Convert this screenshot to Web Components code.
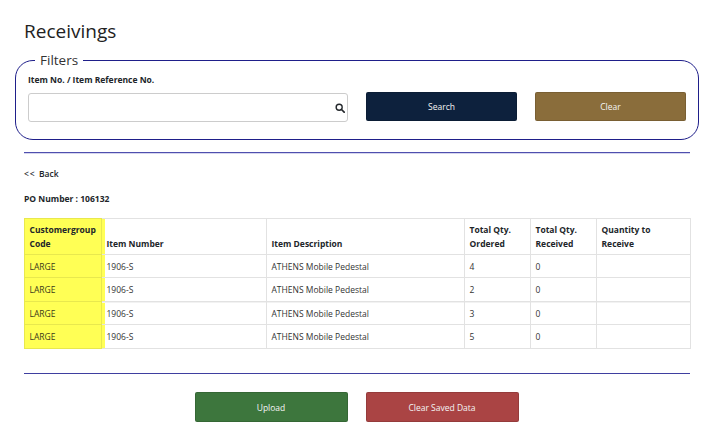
<!DOCTYPE html>
<html>
<head>
<meta charset="utf-8">
<style>
  html, body { margin: 0; background: #fff; }
  body { font-family: "Open Sans", "Noto Sans", sans-serif; color: #212529; }
</style>
</head>
<body>
<receivings-page></receivings-page>

<script>
class UiButton extends HTMLElement {
  connectedCallback() {
    this.attachShadow({ mode: 'open' });
    this.shadowRoot.innerHTML = `
      <style>
        :host {
          display: flex;
          align-items: center;
          justify-content: center;
          box-sizing: border-box;
          width: var(--btn-width, 151px);
          height: var(--btn-height, 29px);
          border-radius: 2px;
          border: 1px solid rgba(0,0,0,.12);
          background: var(--btn-bg);
          color: #f4f4f4;
          font-size: 8.5px;
          font-weight: 500;
        }
      </style>
      <slot></slot>
    `;
  }
}

class FilterPanel extends HTMLElement {
  connectedCallback() {
    this.attachShadow({ mode: 'open' });
    this.shadowRoot.innerHTML = `
      <style>
        :host { display: block; margin: 7px 14px 0 15px; }
        fieldset {
          margin: 0;
          padding: 0 12px 0 12px;
          height: 88px;
          box-sizing: border-box;
          border: 1px solid #1f1f8a;
          border-radius: 18px;
        }
        legend {
          margin-left: 7px;
          padding: 0 5px;
          font-size: 13.5px;
          line-height: 16px;
          color: #333;
        }
        label {
          display: block;
          font-size: 8.5px;
          font-weight: 700;
          line-height: 12px;
          margin-top: 6px;
          color: #212529;
        }
        .row { display: flex; align-items: flex-start; margin-top: 6px; }
        .search {
          box-sizing: border-box;
          width: 320px;
          height: 29px;
          margin-right: 18px;
          border: 1px solid #ccc;
          border-radius: 3px;
          display: flex;
          align-items: center;
          justify-content: flex-end;
          padding-right: 2px;
          margin-top: 1px;
        }
        svg { width: 10px; height: 10px; display: block; }
        ui-button + ui-button { margin-left: 18px; }
      </style>
      <fieldset>
        <legend>Filters</legend>
        <label>Item No. / Item Reference No.</label>
        <div class="row">
          <div class="search">
            <svg viewBox="0 0 12 12" fill="none" stroke="#23272b">
              <circle cx="5" cy="5" r="3.6" stroke-width="1.7"/>
              <path d="M7.8 7.8L11 11" stroke-width="2" stroke-linecap="round"/>
            </svg>
          </div>
          <ui-button style="--btn-bg:#0d213d">Search</ui-button>
          <ui-button style="--btn-bg:#8a6d3b">Clear</ui-button>
        </div>
      </fieldset>
    `;
  }
}

class ReceivingsTable extends HTMLElement {
  connectedCallback() {
    const rows = [
      ['LARGE', '1906-S', 'ATHENS Mobile Pedestal', '4', '0', 23],
      ['LARGE', '1906-S', 'ATHENS Mobile Pedestal', '2', '0', 24],
      ['LARGE', '1906-S', 'ATHENS Mobile Pedestal', '3', '0', 23],
      ['LARGE', '1906-S', 'ATHENS Mobile Pedestal', '5', '0', 24]
    ];
    const body = rows.map(r => `
      <tr style="height:${r[5]}px">
        <td class="code">${r[0]}</td>
        <td>${r[1]}</td>
        <td>${r[2]}</td>
        <td>${r[3]}</td>
        <td>${r[4]}</td>
        <td></td>
      </tr>`).join('');

    this.attachShadow({ mode: 'open' });
    this.shadowRoot.innerHTML = `
      <style>
        :host { display: block; margin: 0 22px 0 24px; }
        table {
          width: 666px;
          table-layout: fixed;
          border-collapse: collapse;
          font-size: 8.5px;
          color: #212529;
        }
        th, td { border: 1px solid #e2e2e2; padding: 0 4.5px; text-align: left; box-sizing: border-box; }
        th { font-weight: 700; line-height: 13.4px; vertical-align: bottom; padding-bottom: 4px; height: 36px; }
        td { vertical-align: middle; color: #333; }
        tbody tr:nth-child(3) td:not(.code) { box-shadow: inset 0 1px 0 #f2f2f2; }
        .code {
          background: #ffff55;
          color: #3a3a1a;
          border-color: #e8e84e;
          box-shadow: 3px 0 0 #ffff55;
        }
        th.code { color: #212529; }
      </style>
      <table>
        <colgroup>
          <col style="width:77px"><col style="width:165px"><col style="width:198px">
          <col style="width:66px"><col style="width:66px"><col style="width:94px">
        </colgroup>
        <thead>
          <tr>
            <th class="code">Customergroup Code</th>
            <th>Item Number</th>
            <th>Item Description</th>
            <th>Total Qty. Ordered</th>
            <th>Total Qty. Received</th>
            <th>Quantity to<br>Receive</th>
          </tr>
        </thead>
        <tbody>${body}</tbody>
      </table>
    `;
  }
}

class ReceivingsPage extends HTMLElement {
  connectedCallback() {
    this.attachShadow({ mode: 'open' });
    this.shadowRoot.innerHTML = `
      <style>
        :host { display: block; width: 712px; height: 441px; overflow: hidden; padding-top: 18px; box-sizing: border-box; }
        h1 {
          margin: 0 0 2px 24px;
          font-size: 19px;
          line-height: 27px;
          font-weight: 500;
          color: #222;
        }
        .rule { height: 1px; margin: 0 22px 0 24px; background: #3f3fa0; }
        .rule.soft { background: #4f4fae; box-shadow: 0 1px 0 #d5d5ee; }
        .back { margin: 14px 0 0 24px; font-size: 8.5px; font-weight: 600; line-height: 14px; color: #212529; }
        .back span { letter-spacing: 1px; margin-right: 1px; }
        .po { margin: 11px 0 0 24px; font-size: 8.5px; font-weight: 700; line-height: 14px; color: #212529; }
        .actions { display: flex; justify-content: center; gap: 18px; margin: 18px 0 0 1px; --btn-width: 153px; --btn-height: 30px; }
      </style>
      <h1>Receivings</h1>
      <filter-panel></filter-panel>
      <div class="rule soft" style="margin-top:12px"></div>
      <div class="back"><span>&lt;&lt;</span> Back</div>
      <div class="po">PO Number : 106132</div>
      <receivings-table style="margin-top:12px"></receivings-table>
      <div class="rule" style="margin-top:24px"></div>
      <div class="actions">
        <ui-button style="--btn-bg:#3d763d">Upload</ui-button>
        <ui-button style="--btn-bg:#aa4444">Clear Saved Data</ui-button>
      </div>
    `;
  }
}

customElements.define('ui-button', UiButton);
customElements.define('filter-panel', FilterPanel);
customElements.define('receivings-table', ReceivingsTable);
customElements.define('receivings-page', ReceivingsPage);
</script>
</body>
</html>
